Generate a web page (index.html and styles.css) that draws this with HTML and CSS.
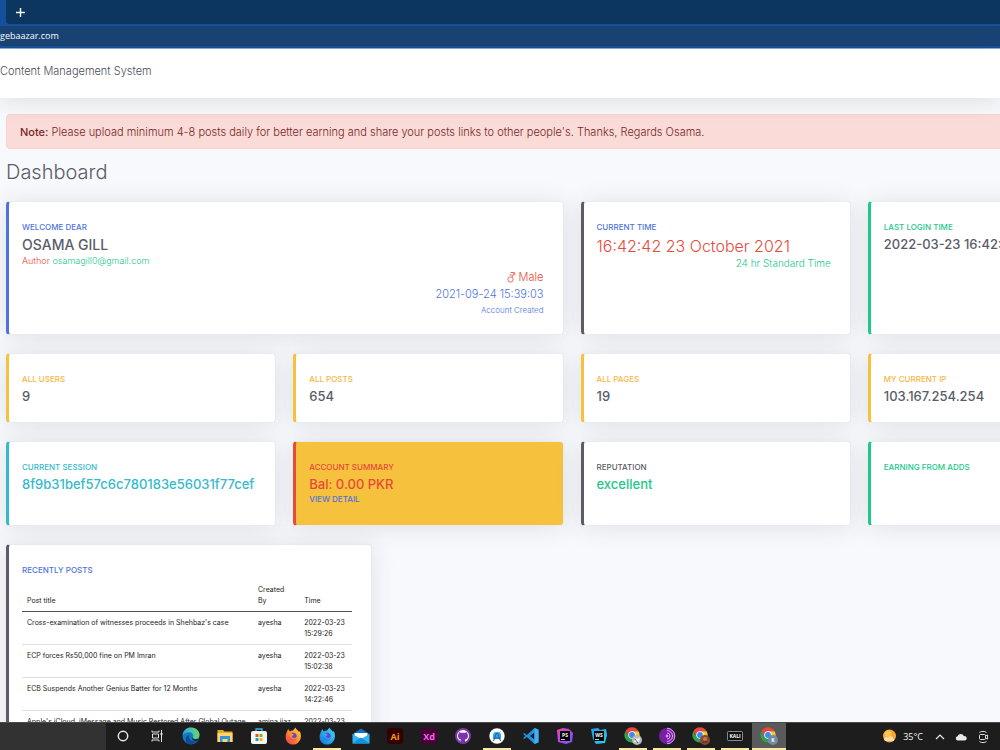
FILE: index.html
```html
<!DOCTYPE html>
<html lang="en">
<head>
  <meta charset="UTF-8">
  <title>Dashboard - Content Management System</title>
  <link rel="stylesheet" href="styles.css">
</head>
<body>
  <!-- browser bar -->
  <div class="browser">
    <div class="tabs">
      <div class="tab-current"></div>
      <button class="new-tab" aria-label="New tab">
        <svg width="9" height="9" viewBox="0 0 9 9"><path d="M4.5 0v9M0 4.5h9" stroke="#fff" stroke-width="1.4"/></svg>
      </button>
    </div>
    <input class="address" type="text" value="gebaazar.com" aria-label="Address">
  </div>

  <header class="topbar">Content Management System</header>

  <main class="content">
    <div class="alert"><strong>Note:</strong> Please upload minimum 4-8 posts daily for better earning and share your posts links to other people's. Thanks, Regards Osama.</div>
    <h1>Dashboard</h1>

    <div class="cards">
      <section class="card wide primary">
        <h2 class="label">Welcome Dear</h2>
        <div class="value name">OSAMA GILL</div>
        <div class="account"><span class="text-danger">Author</span> <span class="text-success">osamagill0@gmail.com</span></div>
        <div class="details">
          <div class="text-danger">
            <svg width="9" height="12" viewBox="0 0 9 12" fill="none" stroke="currentColor" stroke-width="0.8"><circle cx="3.5" cy="8.500" r="2.600"/><path d="M5 6.300L7 2M3.500 1.500h4l.5 3M2.500 4h3"/></svg>
            Male
          </div>
          <div class="text-primary">2021-09-24 15:39:03</div>
          <div class="text-primary small">Account Created</div>
        </div>
      </section>
      <section class="card dark">
        <h2 class="label text-primary">Current Time</h2>
        <div class="clock text-danger">16:42:42 23 October 2021</div>
        <div class="standard text-success">24 hr Standard Time</div>
      </section>
      <section class="card success">
        <h2 class="label">Last Login Time</h2>
        <div class="value">2022-03-23 16:42:33</div>
      </section>

      <section class="card warning">
        <h2 class="label">All Users</h2>
        <div class="value">9</div>
      </section>
      <section class="card warning">
        <h2 class="label">All Posts</h2>
        <div class="value">654</div>
      </section>
      <section class="card warning">
        <h2 class="label">All Pages</h2>
        <div class="value">19</div>
      </section>
      <section class="card warning">
        <h2 class="label">My Current IP</h2>
        <div class="value">103.167.254.254</div>
      </section>

      <section class="card info">
        <h2 class="label">Current Session</h2>
        <div class="value text-info">8f9b31bef57c6c780183e56031f77cef</div>
      </section>
      <section class="card danger filled">
        <h2 class="label">Account Summary</h2>
        <div class="value text-danger">Bal: 0.00 PKR</div>
        <a class="detail-link" href="#">View Detail</a>
      </section>
      <section class="card dark">
        <h2 class="label">Reputation</h2>
        <div class="value text-success">excellent</div>
      </section>
      <section class="card success">
        <h2 class="label">Earning From Adds</h2>
      </section>
    </div>

    <section class="card dark posts">
      <h2 class="label text-primary">Recently Posts</h2>
      <table>
        <thead>
          <tr><th class="col-title">Post title</th><th class="col-author">Created By</th><th>Time</th></tr>
        </thead>
        <tbody>
          <tr><td>Cross-examination of witnesses proceeds in Shehbaz's case</td><td>ayesha</td><td>2022-03-23 15:29:26</td></tr>
          <tr><td>ECP forces Rs50,000 fine on PM Imran</td><td>ayesha</td><td>2022-03-23 15:02:38</td></tr>
          <tr><td>ECB Suspends Another Genius Batter for 12 Months</td><td>ayesha</td><td>2022-03-23 14:22:46</td></tr>
          <tr><td>Apple's iCloud, iMessage and Music Restored After Global Outage</td><td>amina ijaz</td><td>2022-03-23</td></tr>
        </tbody>
      </table>
    </section>
  </main>

  <!-- shared icon shapes -->
  <svg class="defs" aria-hidden="true">
    <defs>
      <linearGradient id="edgeTop" x1="0" y1="0" x2="1" y2="0"><stop offset="0" stop-color="#2aa8e0"/><stop offset="1" stop-color="#6ad86a"/></linearGradient>
      <linearGradient id="fire" x1="1" y1="0" x2="0" y2="1"><stop offset="0" stop-color="#ffd83d"/><stop offset=".5" stop-color="#ff8a2a"/><stop offset="1" stop-color="#f0305a"/></linearGradient>
      <linearGradient id="ice" x1="1" y1="0" x2="0" y2="1"><stop offset="0" stop-color="#3fe0f5"/><stop offset="1" stop-color="#1470e0"/></linearGradient>
      <linearGradient id="storm" x1="0" y1="0" x2="1" y2="1"><stop offset="0" stop-color="#f0489a"/><stop offset=".5" stop-color="#b345f1"/><stop offset="1" stop-color="#6b57ff"/></linearGradient>
      <linearGradient id="web" x1="0" y1="0" x2="1" y2="1"><stop offset="0" stop-color="#1d9bf0"/><stop offset="1" stop-color="#22d3ee"/></linearGradient>
      <symbol id="fox" viewBox="0 0 18 18">
        <path d="M3 4.500L4.200 2l1.600 2.500C7 3.500 8 3.500 9 3.500L11.500.5c.5 2 2.500 2.500 3.500 4.500l.8-1C19 11 15 17.500 9 17.500S-.5 11.500 3 4.500z"/>
        <circle cx="9" cy="9.500" r="3.700" fill="#6b3fd0"/>
        <path d="M3.500 7c2-1.500 4-.5 5.500 0 1 .5.500 1.500-1 2 0 2 3 3 5 .5 0 4-7 5-9 0z"/>
      </symbol>
      <symbol id="chrome" viewBox="0 0 18 18">
        <path d="M1.600 4.700A8.500 8.500 0 0 1 16.400 4.700H9L5.300 11.100z" fill="#e8453c"/>
        <path d="M16.400 4.700A8.500 8.500 0 0 1 9 17.500L12.700 11.100 9 4.700z" fill="#f9c52d"/>
        <path d="M9 17.500A8.500 8.500 0 0 1 1.600 4.700L5.300 11.100l3.700 2 3.700-2z" fill="#2ba24c"/>
        <circle cx="9" cy="9" r="4.200" fill="#fff"/><circle cx="9" cy="9" r="3.300" fill="#4285f4"/>
      </symbol>
    </defs>
  </svg>

  <footer class="taskbar">
    <div class="search"></div>
    <nav class="apps">
      <button aria-label="Cortana"><svg viewBox="0 0 18 18"><circle cx="9" cy="9" r="4.700" fill="none" stroke="#e8e8e8" stroke-width="1.500"/></svg></button>
      <button aria-label="Task view"><svg viewBox="0 0 18 18" fill="none" stroke="#e0e0e0"><path d="M4 3.500v1.500h7V3.500M4 14.500V13h7v1.500M4.500 7h6v4h-6zM13.500 3v12"/><path d="M12.500 7h2" stroke-width="2"/></svg></button>
      <button aria-label="Edge"><svg viewBox="0 0 18 18"><circle cx="9" cy="9" r="8.500" fill="#1677c9"/><path d="M.6 8C1.300 3 5 .5 9 .5c5 0 8.500 3.500 8.500 7 0 3-2 4.500-4.300 4.500-1.800 0-3-.8-2.200-2C12.500 5 5 3.500.6 8z" fill="url(#edgeTop)"/><path d="M7.500 8c-2 4 2 8 7.500 5.500-2.500 4.500-9 5-11 1C2.500 11 5 8 7.500 8z" fill="#114a94"/><path d="M10.800 10.200c-.3 1.800 2.500 2.800 6 1.500-.2.800-.8 1.500-1.500 2-3.500.8-6-1-4.500-3.500z" fill="#1d1d1d"/></svg></button>
      <button aria-label="File Explorer"><svg viewBox="0 0 18 18"><path d="M1.500 3h5.500l1.500 1.500h8V15h-15z" fill="#e9a52c"/><path d="M1.500 6h15v9h-15z" fill="#ffd56a"/><path d="M4 9h10v6h-2.500v-3h-5v3H4z" fill="#3294dc"/></svg></button>
      <button aria-label="Microsoft Store"><svg viewBox="0 0 18 18"><path d="M6 5V2h6v3" fill="none" stroke="#3bb0ec" stroke-width="1.400"/><rect x="1" y="4" width="16" height="13" rx="2" fill="#f4f4f4"/><path d="M5.500 7h3v3h-3z" fill="#f25022"/><path d="M9.500 7h3v3h-3z" fill="#7fba00"/><path d="M5.500 11h3v3h-3z" fill="#00a4ef"/><path d="M9.500 11h3v3h-3z" fill="#ffb900"/></svg></button>
      <button aria-label="Firefox"><svg><use href="#fox" fill="url(#fire)"/></svg></button>
      <button class="open" aria-label="Firefox Developer Edition"><svg><use href="#fox" fill="url(#ice)"/></svg></button>
      <button aria-label="Mail"><svg viewBox="0 0 18 18"><path d="M.5 7L9 1.500 17.500 7v2H.5z" fill="#1272c2"/><path d="M2.500 6h13v6h-13z" fill="#fff"/><path d="M.5 7L9 12l8.500-5v9.500H.5z" fill="#35b5f0"/><path d="M.5 16.500L9 10.500l8.500 6z" fill="#1590da"/></svg></button>
      <button aria-label="Illustrator"><svg viewBox="0 0 18 18"><rect x="1" y="1" width="16" height="16" rx="3" fill="#330000"/><text x="9" y="12.500" class="glyph" fill="#ff9a00">Ai</text></svg></button>
      <button aria-label="Adobe XD"><svg viewBox="0 0 18 18"><rect x="1" y="1" width="16" height="16" rx="1" fill="#470137"/><text x="9" y="12.500" class="glyph" fill="#ff61f6">Xd</text></svg></button>
      <button aria-label="GitHub Desktop"><svg viewBox="0 0 18 18"><circle cx="9" cy="9" r="8" fill="#7b35a8"/><circle cx="9" cy="9" r="6" fill="#fff"/><path d="M7 15v-2.500c-2-.5-3-1.500-3-3.700 0-1 .3-1.500.8-2V5l2 .8h4.400l2-.8v1.800c.5.5.8 1 .8 2 0 2.200-1 3.200-3 3.700V15z" fill="#7b35a8"/><path d="M7 13.700c-1.500.3-1.600-.8-2.400-1" fill="none" stroke="#7b35a8" stroke-width=".8"/></svg></button>
      <button class="open" aria-label="Android Studio"><svg viewBox="0 0 18 18"><circle cx="9" cy="9" r="7.700" fill="#fff"/><path d="M5 8a4 3 0 0 1 8 0v4H5z" fill="#36a5e8"/><path d="M6 4.500l1 1.500M12 4.500L11 6" stroke="#3ddc84"/><path d="M8.500 6L5.500 14M9.500 6l3 8M6.500 11h5" stroke="#1c5fa8" fill="none"/></svg></button>
      <button aria-label="Visual Studio Code"><svg viewBox="0 0 18 18"><path d="M12.500 1L4.800 8 2.300 6 1 6.700 3.300 9 1 11.300l1.300.7 2.500-2 7.700 7 4-1.800V2.800zM12.500 5.500v7L8 9z" fill="#2490db" fill-rule="evenodd"/><path d="M12.500 1l4 1.800v12.400l-4 1.800z" fill="#43b0f5"/></svg></button>
      <button aria-label="PhpStorm"><svg viewBox="0 0 18 18"><path d="M1 3l6-2 6 1 4 4-1 9-6 2-8-2z" fill="url(#storm)"/><path d="M4 4h10v10H4z" fill="#000"/><text x="9" y="9.500" class="mini">PS</text><path d="M5 12.500h4" stroke="#fff" stroke-width=".8"/></svg></button>
      <button aria-label="WebStorm"><svg viewBox="0 0 18 18"><path d="M1 2l7-1 2 2 6-1 1 6-2 8-9 1-3-5z" fill="url(#web)"/><path d="M4 4h10v10H4z" fill="#000"/><text x="9" y="9.500" class="mini">WS</text><path d="M5 12.500h4" stroke="#fff" stroke-width=".8"/></svg></button>
      <button class="open" aria-label="Chrome"><svg viewBox="0 0 18 18"><use href="#chrome" width="16" height="16"/><circle cx="13" cy="13" r="5" fill="#b9bcbf"/><path d="M10 15l2-4 2 1 2-2-1 5z" fill="#f5f5f5"/><path d="M11 12l3 4" stroke="#565b60"/></svg></button>
      <button class="open" aria-label="Tor Browser"><svg viewBox="0 0 18 18" fill="none" stroke="#d9a6f5"><circle cx="9" cy="9" r="8" fill="#7b1fa2" stroke="none"/><path d="M9 3.500a5.500 5.500 0 0 1 0 11M9 6a3 3 0 0 1 0 6M9 1.200a7.700 7.700 0 0 1 0 15.600"/><circle cx="9" cy="9" r="1" fill="#d9a6f5"/></svg></button>
      <button class="open" aria-label="Chrome, second profile"><svg viewBox="0 0 18 18"><use href="#chrome" width="16" height="16"/><circle cx="13" cy="13" r="5" fill="#87492e"/><circle cx="13" cy="12" r="2" fill="#bd7a58"/><path d="M10 16c1-3 5-3 6 0z" fill="#6b3a28"/></svg></button>
      <button class="open" aria-label="Kali Linux"><svg viewBox="0 0 18 18"><rect x="1.500" y="4.500" width="15" height="9" rx="1" fill="#111" stroke="#aaa" stroke-width=".8"/><text x="9" y="11" class="mini">KALI</text></svg></button>
      <button class="open active" aria-label="Chrome, third profile"><svg viewBox="0 0 18 18"><use href="#chrome" width="16" height="16"/><circle cx="13" cy="13" r="5" fill="#708da5"/><text x="13" y="15" class="mini">K</text></svg></button>
    </nav>
    <div class="tray">
      <svg width="15" height="15" viewBox="0 0 15 15"><circle cx="7.500" cy="7" r="6.500" fill="#f8a72c"/><circle cx="6" cy="5" r="3.500" fill="#ffc451"/><path d="M4 12a2 2 0 0 1 0-4c1 0 1.500.3 2 .8a3 3 0 0 1 5.500.7A1.500 1.500 0 0 1 11.500 12z" fill="#fbdcae"/></svg>
      <span class="temp">35°C</span>
      <svg class="chevron" width="10" height="10" viewBox="0 0 10 10"><path d="M1 7l4-4 4 4" fill="none" stroke="#eee" stroke-width="1.100"/></svg>
      <svg width="12" height="10" viewBox="0 0 12 10"><path d="M2.500 8.500a2.200 2.200 0 0 1 0-4.300 3.500 3.500 0 0 1 6.500 0 2.200 2.200 0 0 1 1 4.300z" fill="#e9e9e9"/></svg>
      <svg width="12" height="14" viewBox="0 0 12 14" fill="none" stroke="#ddd"><rect x="2.500" y="4.500" width="6" height="5" rx="1"/><path d="M8.500 6l2-1v4l-2-1M2.500 2.500c2-1.500 5-1.500 7 0M2.500 11.500c2 1.500 5 1.500 7 0"/></svg>
    </div>
  </footer>
</body>
</html>
```
FILE: styles.css
```css
* {
  box-sizing: border-box;
}
body {
  margin: 0;
  height: 100vh;
  display: flex;
  flex-direction: column;
  overflow: hidden;
  background-color: #f8f9fc;
  color: #5a5c69;
  font-family: Inter, "Open Sans", sans-serif;
  font-size: 11px;
  font-weight: 300;
}
button {
  border: none;
  padding: 0;
  background: none;
  cursor: pointer;
}

/* browser bar */
.browser {
  flex: none;
  background-color: #15519b;
  border-bottom: 1px solid #8fb0d8;
}
.tabs {
  display: flex;
  height: 24px;
  background-color: #15519b;
}
.tab-current {
  width: 6px;
  background-color: #15519b;
}
.new-tab {
  flex: 1;
  display: flex;
  align-items: center;
  padding-left: 10px;
  background-color: #0c3560;
  border-radius: 0 0 0 4px;
}
.address {
  display: block;
  width: 100%;
  height: 20px;
  margin: 2px 0;
  padding: 0;
  border: none;
  background-color: #184374;
  color: #fff;
  font: 9px/20px "Open Sans", sans-serif;
}

.topbar {
  flex: none;
  position: relative;
  height: 49px;
  line-height: 45px;
  background-color: #fff;
  color: #4b4d58;
  box-shadow: 0 2px 24px rgba(58, 59, 69, 0.15);
}

/* the grid runs past the right edge of the window */
.content {
  flex: 1;
  min-height: 0;
  overflow: hidden;
  margin-right: -138px;
  padding: 16px 0 0 6px;
}
.alert {
  padding: 1px 13px 0;
  line-height: 32px;
  border: 1px solid #f8d3cf;
  border-radius: 4px;
  background-color: #fadbd8;
  color: #78261f;
}
.alert strong {
  font-weight: 500;
}
h1 {
  margin: 11px 0 16px;
  font-size: 20px;
  line-height: 25px;
  font-weight: 300;
}

.cards {
  display: grid;
  grid-template-columns: repeat(4, minmax(0, 1fr));
  grid-template-rows: auto auto 85px;
  gap: 18px 17px;
}
.card {
  padding: 19px 19px 17px 13px;
  border: 1px solid #e9ebf3;
  border-left-width: 3px;
  border-radius: 4px;
  background-color: #fff;
  box-shadow: 0 2px 24px rgba(58, 59, 69, 0.12);
}
.wide {
  grid-column: span 2;
}
.primary { border-left-color: #4e73df; }
.dark { border-left-color: #5a5c69; }
.success { border-left-color: #1cc88a; }
.warning { border-left-color: #f6c23e; }
.info { border-left-color: #36b9cc; }
.danger { border-left-color: #e74a3b; }
.filled {
  background-color: #f6c13d;
}

.label {
  margin: 0 0 3px;
  font-size: 8px;
  line-height: 12px;
  font-weight: 500;
  text-transform: uppercase;
}
.primary .label { color: #4e73df; }
.success .label { color: #1cc88a; }
.warning .label { color: #f6b73e; }
.info .label { color: #36b9cc; }
.danger .label { color: #e74a3b; }
.value {
  font-size: 13px;
  line-height: 17px;
  font-weight: 500;
  white-space: nowrap;
}
.name {
  font-size: 14px;
}
.label.text-primary,
.text-primary { color: #4e73df; }
.text-danger { color: #e74a3b; }
.text-success { color: #1cc88a; }
.text-info { color: #36b9cc; }

.account {
  font-size: 9px;
  line-height: 16px;
}
.details {
  text-align: right;
  line-height: 17px;
}
.details svg {
  vertical-align: -2px;
}
.details .small {
  font-size: 8px;
  line-height: 14px;
}
.clock {
  font-size: 16px;
  line-height: 20px;
}
.standard {
  font-size: 10px;
  line-height: 14px;
  text-align: right;
}
.detail-link {
  display: block;
  font-size: 8px;
  line-height: 12px;
  font-weight: 500;
  color: #4e73df;
  text-decoration: none;
  text-transform: uppercase;
}

.posts {
  width: 366px;
  margin-top: 18px;
}
.posts table {
  width: 100%;
  table-layout: fixed;
  border-collapse: collapse;
  color: #222;
  font-size: 7px;
  line-height: 11px;
  font-weight: 400;
}
.posts th,
.posts td {
  padding: 5px;
  border-bottom: 1px solid #dee0e6;
  text-align: left;
  vertical-align: top;
  font-weight: 400;
}
.posts th {
  vertical-align: bottom;
  border-bottom-color: #555;
}
.posts td:first-child {
  white-space: nowrap;
}
.col-title { width: 70%; }
.col-author { width: 14%; }

/* taskbar */
.defs {
  position: absolute;
  width: 0;
  height: 0;
}
.taskbar {
  flex: none;
  position: relative;
  display: flex;
  height: 28px;
  background-color: #1d1d1d;
  border-top: 1px solid #4a4a4a;
}
.search {
  width: 106px;
  background-color: #323232;
}
.apps {
  display: flex;
}
.apps button {
  width: 34px;
  padding-bottom: 2px;
  display: flex;
  align-items: center;
  justify-content: center;
  position: relative;
}
.apps svg {
  width: 18px;
  height: 18px;
}
.apps .open::after {
  content: "";
  position: absolute;
  left: 3px;
  right: 3px;
  bottom: 0;
  height: 2px;
  background-color: #f7e9a3;
}
.apps .active {
  background-color: #5a5a5a;
}
.apps .active::after {
  left: 0;
  right: 0;
}
.glyph {
  font: 700 9px "Open Sans", sans-serif;
  text-anchor: middle;
}
.mini {
  font: 700 5px "Open Sans", sans-serif;
  text-anchor: middle;
  fill: #fff;
}
.tray {
  margin-left: auto;
  display: flex;
  align-items: center;
  gap: 10px;
  padding-right: 11px;
}
.temp {
  margin-left: -4px;
  margin-right: 2px;
  color: #f2f2f2;
  font: 9px "Open Sans", sans-serif;
}
```
